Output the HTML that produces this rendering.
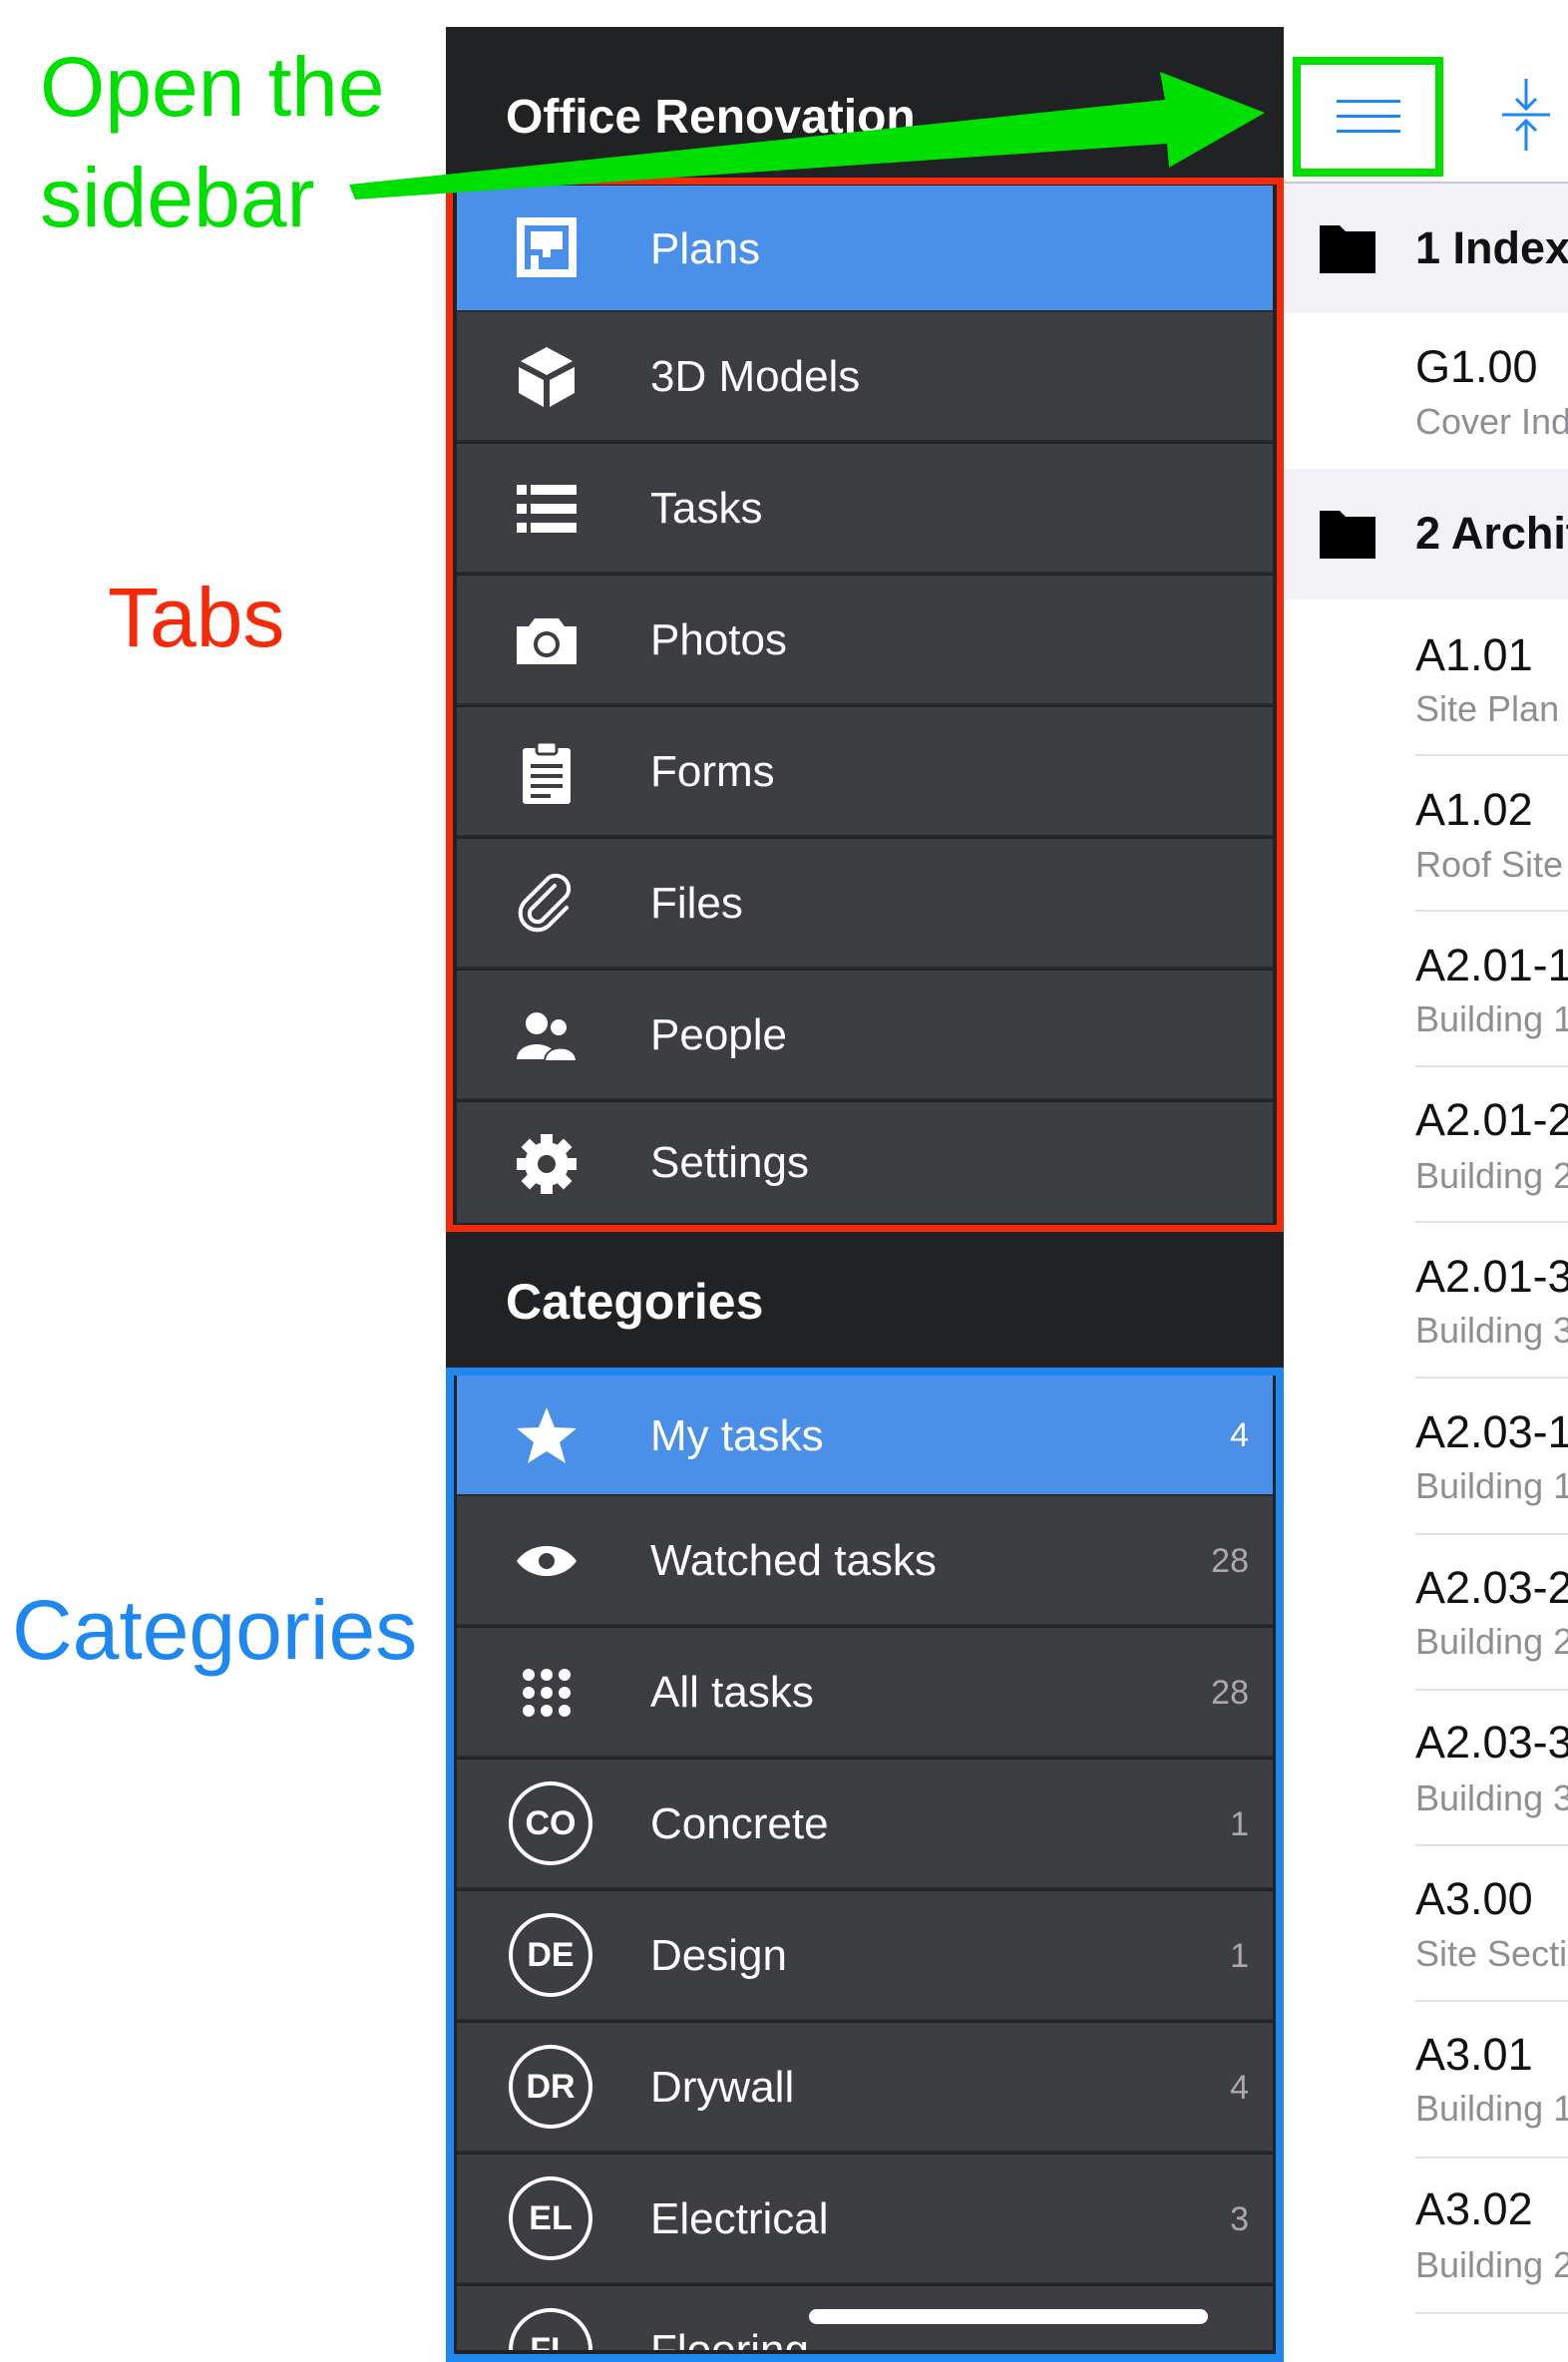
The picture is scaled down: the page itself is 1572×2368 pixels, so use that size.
<!DOCTYPE html>
<html><head><meta charset="utf-8"><style>
*{margin:0;padding:0;box-sizing:border-box}
html,body{width:1572px;height:2368px;overflow:hidden}
body{background:#fff;position:relative;font-family:"Liberation Sans",Arial,sans-serif}
.a{position:absolute;white-space:nowrap}
.row{position:absolute;left:458px;width:818px;height:130px;background:#3d3e41;border-bottom:2px solid #2a2b2e}
.row.sel{background:#4a90e9}
.lbl{position:absolute;left:194px;top:0;height:130px;line-height:130px;font-size:44px;color:#fff;white-space:nowrap}
.cnt{position:absolute;right:24px;top:0;height:130px;line-height:130px;font-size:34px;color:#aaa}
.ic{position:absolute;left:58px;top:33px;width:64px;height:64px}
.circ{position:absolute;left:52px;top:22px;width:84px;height:84px;border:4px solid #fff;border-radius:50%;color:#fff;font-size:34px;font-weight:bold;text-align:center;line-height:76px}
#rp{position:absolute;left:1287px;top:0;width:285px;height:2368px;overflow:hidden}
.t{position:absolute;left:132px;font-size:45px;color:#111;line-height:60px;height:60px;white-space:nowrap}
.s{position:absolute;left:132px;font-size:36px;color:#8e8e93;line-height:50px;height:50px;white-space:nowrap}
.sep{position:absolute;left:132px;width:153px;height:2px;background:#e2e2e6}
</style></head><body>
<div class="a" style="left:447px;top:27px;width:840px;height:2341px;background:#212224"></div>
<div class="a" style="left:507px;top:88px;font-size:48px;font-weight:bold;color:#fff;line-height:60px">Office Renovation</div>

<div class="row sel" style="top:186px;height:127px"><svg class="ic" viewBox="0 0 64 64" style="top:30px"><rect x="2" y="2" width="60" height="60" fill="#fff"/><rect x="10" y="10" width="44" height="44" fill="#4a90e9"/><rect x="16" y="16" width="32" height="18" fill="#fff"/><rect x="28" y="34" width="8" height="8" fill="#fff"/><rect x="16" y="40" width="8" height="14" fill="#fff"/></svg><div class="lbl" style="height:127px;line-height:127px">Plans</div></div>
<div class="row" style="top:313px"><svg class="ic" viewBox="0 0 64 64"><path d="M32 2 L58 16 L32 30 L6 16Z" fill="#fff"/><path d="M4 22 L29 35 L29 62 L4 48Z" fill="#fff"/><path d="M60 22 L35 35 L35 62 L60 48Z" fill="#fff"/></svg><div class="lbl">3D Models</div></div>
<div class="row" style="top:445px"><svg class="ic" viewBox="0 0 64 64"><rect x="2" y="8" width="10" height="10" fill="#fff"/><rect x="16" y="8" width="46" height="10" fill="#fff"/><rect x="2" y="27" width="10" height="10" fill="#fff"/><rect x="16" y="27" width="46" height="10" fill="#fff"/><rect x="2" y="46" width="10" height="10" fill="#fff"/><rect x="16" y="46" width="46" height="10" fill="#fff"/></svg><div class="lbl">Tasks</div></div>
<div class="row" style="top:577px"><svg class="ic" viewBox="0 0 64 64"><path d="M2 18 H14 L20 10 H44 L50 18 H62 V56 H2Z" fill="#fff"/><circle cx="32" cy="36" r="13" fill="#3d3e41"/><circle cx="32" cy="36" r="9" fill="#fff"/></svg><div class="lbl">Photos</div></div>
<div class="row" style="top:709px"><svg class="ic" viewBox="0 0 64 64"><rect x="8" y="8" width="48" height="56" rx="3" fill="#fff"/><rect x="22" y="2" width="20" height="12" rx="3" fill="#fff" stroke="#3d3e41" stroke-width="3"/><rect x="16" y="24" width="32" height="4" fill="#3d3e41"/><rect x="16" y="34" width="32" height="4" fill="#3d3e41"/><rect x="16" y="44" width="32" height="4" fill="#3d3e41"/><rect x="16" y="54" width="20" height="4" fill="#3d3e41"/></svg><div class="lbl">Forms</div></div>
<div class="row" style="top:841px"><svg class="ic" viewBox="0 0 64 64"><path d="M40 14 L16 38 a8 8 0 0 0 11 11 L52 24 a13 13 0 0 0 -18 -18 L10 30 a17 17 0 0 0 24 24 L52 36" fill="none" stroke="#fff" stroke-width="4" stroke-linecap="round"/></svg><div class="lbl">Files</div></div>
<div class="row" style="top:973px"><svg class="ic" viewBox="0 0 64 64"><circle cx="22" cy="20" r="11" fill="#fff"/><path d="M2 56 C2 36 42 36 42 56Z" fill="#fff"/><circle cx="44" cy="24" r="9" fill="#fff" stroke="#3d3e41" stroke-width="2"/><path d="M30 58 C30 40 62 40 62 58Z" fill="#fff" stroke="#3d3e41" stroke-width="2"/></svg><div class="lbl">People</div></div>
<div class="row" style="top:1105px;height:121px;border:none"><svg class="ic" viewBox="0 0 64 64" style="top:30px"><g fill="#fff" transform="translate(32 32)"><rect x="-6" y="-30" width="12" height="60"/><rect x="-6" y="-30" width="12" height="60" transform="rotate(45)"/><rect x="-6" y="-30" width="12" height="60" transform="rotate(90)"/><rect x="-6" y="-30" width="12" height="60" transform="rotate(135)"/><circle r="22"/></g><circle cx="32" cy="32" r="9" fill="#3d3e41"/></svg><div class="lbl" style="height:121px;line-height:121px">Settings</div></div>
<div class="a" style="left:447px;top:178px;width:840px;height:1057px;border:7px solid #f52a0a"></div>

<div class="a" style="left:507px;top:1275px;font-size:50px;font-weight:bold;color:#fff;line-height:60px">Categories</div>

<div class="row sel" style="top:1379px;height:121px"><svg class="ic" viewBox="0 0 64 64" style="top:28px"><path d="M32 4 L40 24 L62 25 L45 39 L51 60 L32 48 L13 60 L19 39 L2 25 L24 24Z" fill="#fff"/></svg><div class="lbl" style="height:121px;line-height:121px">My tasks</div><div class="cnt" style="color:#fff;height:121px;line-height:121px">4</div></div>
<div class="row" style="top:1500px"><svg class="ic" viewBox="0 0 64 64"><path d="M2 32 C16 12 48 12 62 32 C48 52 16 52 2 32Z" fill="#fff"/><circle cx="32" cy="32" r="8" fill="#3d3e41"/></svg><div class="lbl">Watched tasks</div><div class="cnt">28</div></div>
<div class="row" style="top:1632px"><svg class="ic" viewBox="0 0 64 64"><g fill="#fff"><circle cx="14" cy="14" r="6"/><circle cx="32" cy="14" r="6"/><circle cx="50" cy="14" r="6"/><circle cx="14" cy="32" r="6"/><circle cx="32" cy="32" r="6"/><circle cx="50" cy="32" r="6"/><circle cx="14" cy="50" r="6"/><circle cx="32" cy="50" r="6"/><circle cx="50" cy="50" r="6"/></g></svg><div class="lbl">All tasks</div><div class="cnt">28</div></div>
<div class="row" style="top:1764px"><div class="circ">CO</div><div class="lbl">Concrete</div><div class="cnt">1</div></div>
<div class="row" style="top:1896px"><div class="circ">DE</div><div class="lbl">Design</div><div class="cnt">1</div></div>
<div class="row" style="top:2028px"><div class="circ">DR</div><div class="lbl">Drywall</div><div class="cnt">4</div></div>
<div class="row" style="top:2160px"><div class="circ">EL</div><div class="lbl">Electrical</div><div class="cnt">3</div></div>
<div class="row" style="top:2292px;height:64px;overflow:hidden;border:none"><div class="circ">FL</div><div class="lbl">Flooring</div></div>
<div class="a" style="left:447px;top:1371px;width:840px;height:997px;border:8px solid #1e87f0"></div>
<div class="a" style="left:811px;top:2315px;width:400px;height:15px;border-radius:8px;background:#fff"></div>

<div id="rp">
<div class="a" style="left:0;top:182px;width:285px;height:2px;background:#c8c8cc"></div>
<div class="a" style="left:9px;top:57px;width:151px;height:120px;border:8px solid #00e000"></div>
<div class="a" style="left:53px;top:100px;width:64px;height:3px;background:#1e87f0;box-shadow:0 15px 0 #1e87f0,0 30px 0 #1e87f0"></div>
<svg class="a" style="left:213px;top:75px" width="60" height="80" viewBox="0 0 60 80"><g stroke="#1e87f0" stroke-width="3" fill="none"><path d="M30 4 V34 M20 24 L30 34 L40 24"/><path d="M6 40 H54"/><path d="M30 76 V46 M20 56 L30 46 L40 56"/></g></svg>

<div class="a" style="left:0;top:184px;width:285px;height:130px;background:#f2f2f7"></div>
<div class="a" style="left:0;top:470px;width:285px;height:131px;background:#f2f2f7"></div>
<svg class="a" style="left:34px;top:224px" width="62" height="52" viewBox="0 0 62 52"><path d="M2 2 H22 L28 8 H58 V50 H2Z" fill="#000"/></svg>
<svg class="a" style="left:34px;top:510px" width="62" height="52" viewBox="0 0 62 52"><path d="M2 2 H22 L28 8 H58 V50 H2Z" fill="#000"/></svg>
<div class="t" style="top:219px;font-weight:bold">1 Index</div>
<div class="t" style="top:505px;font-weight:bold">2 Architectural</div>

<div class="t" style="top:338px">G1.00</div><div class="s" style="top:398px">Cover Index</div>
<div class="t" style="top:627px">A1.01</div><div class="s" style="top:686px">Site Plan</div>
<div class="sep" style="top:756px"></div>
<div class="t" style="top:782px">A1.02</div><div class="s" style="top:842px">Roof Site</div>
<div class="sep" style="top:912px"></div>
<div class="t" style="top:938px">A2.01-1</div><div class="s" style="top:997px">Building 1</div>
<div class="sep" style="top:1068px"></div>
<div class="t" style="top:1093px">A2.01-2</div><div class="s" style="top:1154px">Building 2</div>
<div class="sep" style="top:1224px"></div>
<div class="t" style="top:1250px">A2.01-3</div><div class="s" style="top:1309px">Building 3</div>
<div class="sep" style="top:1380px"></div>
<div class="t" style="top:1406px">A2.03-1</div><div class="s" style="top:1465px">Building 1</div>
<div class="sep" style="top:1537px"></div>
<div class="t" style="top:1562px">A2.03-2</div><div class="s" style="top:1621px">Building 2</div>
<div class="sep" style="top:1693px"></div>
<div class="t" style="top:1717px">A2.03-3</div><div class="s" style="top:1778px">Building 3</div>
<div class="sep" style="top:1849px"></div>
<div class="t" style="top:1874px">A3.00</div><div class="s" style="top:1934px">Site Section</div>
<div class="sep" style="top:2005px"></div>
<div class="t" style="top:2030px">A3.01</div><div class="s" style="top:2089px">Building 1</div>
<div class="sep" style="top:2162px"></div>
<div class="t" style="top:2185px">A3.02</div><div class="s" style="top:2246px">Building 2</div>
<div class="sep" style="top:2318px"></div>
</div>

<div class="a" style="left:40px;top:37px;font-size:84px;color:#00e000;line-height:100px">Open the</div>
<div class="a" style="left:40px;top:148px;font-size:84px;color:#00e000;line-height:100px">sidebar</div>
<div class="a" style="left:108px;top:569px;font-size:84px;color:#f52a0a;line-height:100px">Tabs</div>
<div class="a" style="left:12px;top:1584px;font-size:84px;color:#1e87f0;line-height:100px">Categories</div>
<svg class="a" style="left:0;top:0" width="1572" height="300" viewBox="0 0 1572 300"><path d="M350 185 L1168 100 L1163 72 L1268 113 L1172 168 L1170 144 L356 200 Z" fill="#00e000"/></svg>
</body></html>
